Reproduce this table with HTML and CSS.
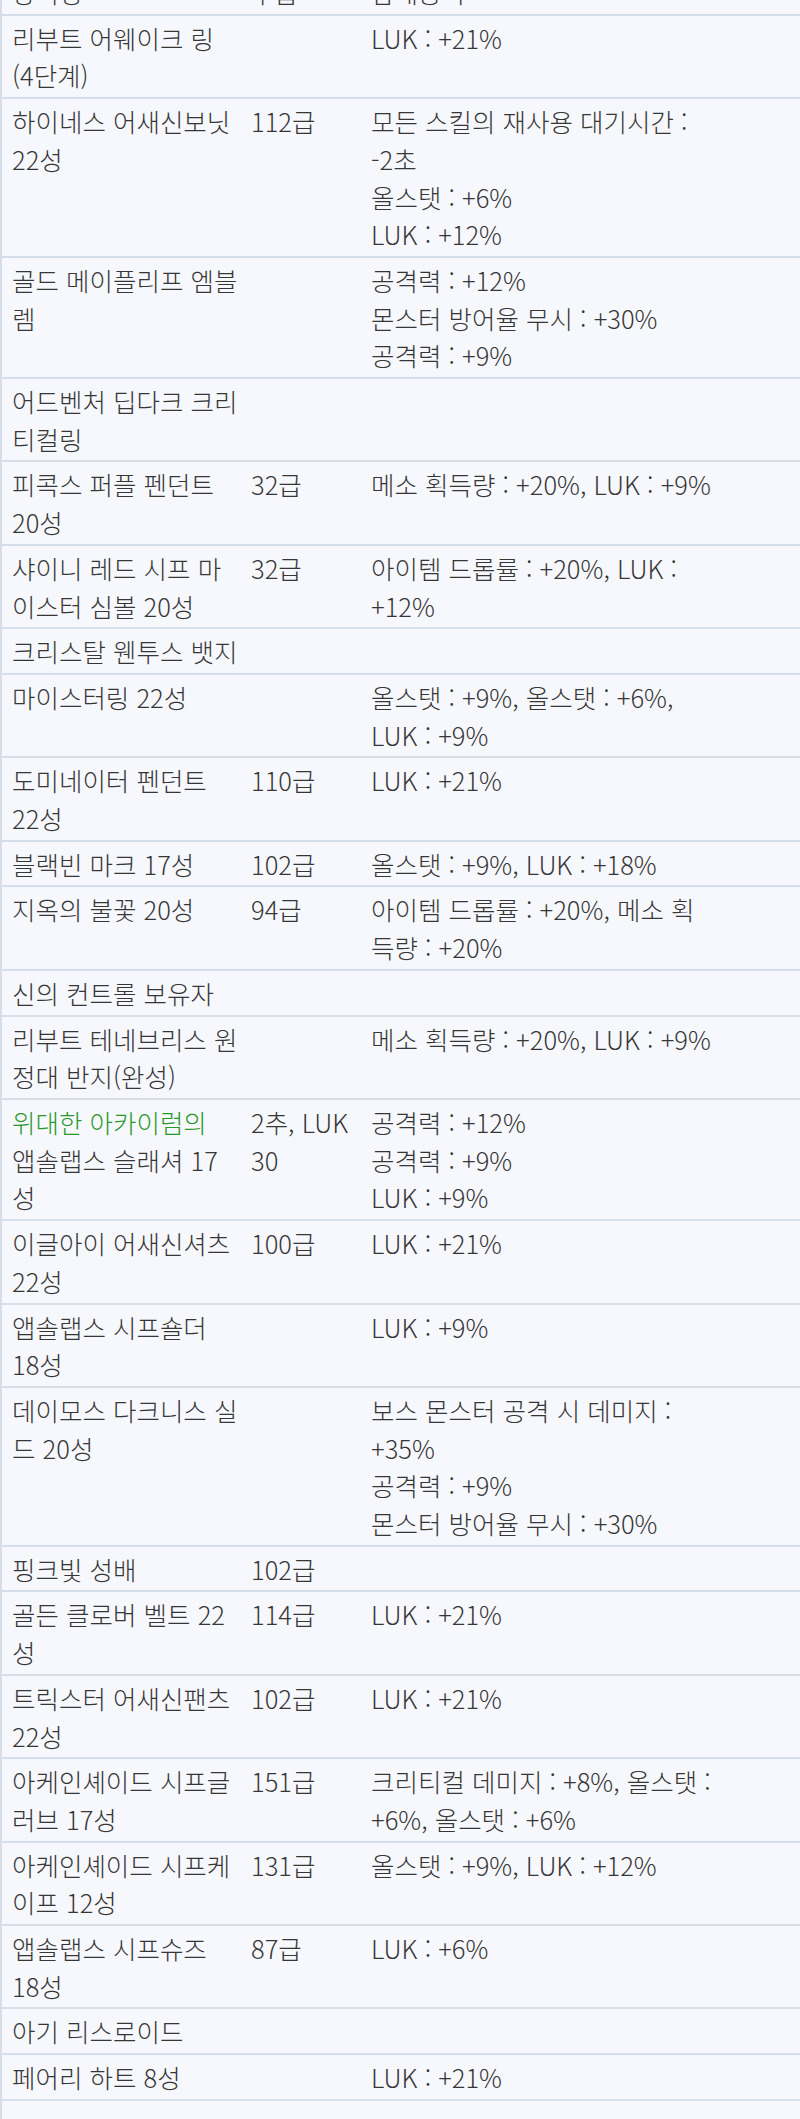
FILE: index.html
```html
<!DOCTYPE html>
<html lang="ko">
<head>
<meta charset="utf-8">
<title>장비 목록</title>
<link rel="stylesheet" href="styles.css">
</head>
<body>
<div class="viewport">
<table class="equip">
<colgroup><col class="c-name"><col class="c-opt"><col class="c-pot"></colgroup>
<tbody>
<tr class="head"><td>장비명</td><td>추옵</td><td>잠재능력</td></tr>
<tr><td>리부트 어웨이크 링<br>(4단계)</td><td></td><td>LUK : +21%</td></tr>
<tr><td>하이네스 어새신보닛<br>22성</td><td>112급</td><td>모든 스킬의 재사용 대기시간 :<br>-2초<br>올스탯 : +6%<br>LUK : +12%</td></tr>
<tr><td>골드 메이플리프 엠블<br>렘</td><td></td><td>공격력 : +12%<br>몬스터 방어율 무시 : +30%<br>공격력 : +9%</td></tr>
<tr><td>어드벤처 딥다크 크리<br>티컬링</td><td></td><td></td></tr>
<tr><td>피콕스 퍼플 펜던트<br>20성</td><td>32급</td><td>메소 획득량 : +20%, LUK : +9%</td></tr>
<tr><td>샤이니 레드 시프 마<br>이스터 심볼 20성</td><td>32급</td><td>아이템 드롭률 : +20%, LUK :<br>+12%</td></tr>
<tr><td>크리스탈 웬투스 뱃지</td><td></td><td></td></tr>
<tr><td>마이스터링 22성</td><td></td><td>올스탯 : +9%, 올스탯 : +6%,<br>LUK : +9%</td></tr>
<tr><td>도미네이터 펜던트<br>22성</td><td>110급</td><td>LUK : +21%</td></tr>
<tr><td>블랙빈 마크 17성</td><td>102급</td><td>올스탯 : +9%, LUK : +18%</td></tr>
<tr><td>지옥의 불꽃 20성</td><td>94급</td><td>아이템 드롭률 : +20%, 메소 획<br>득량 : +20%</td></tr>
<tr><td>신의 컨트롤 보유자</td><td></td><td></td></tr>
<tr><td>리부트 테네브리스 원<br>정대 반지(완성)</td><td></td><td>메소 획득량 : +20%, LUK : +9%</td></tr>
<tr><td><span class="green">위대한 아카이럼의</span><br>앱솔랩스 슬래셔 17<br>성</td><td>2추, LUK<br>30</td><td>공격력 : +12%<br>공격력 : +9%<br>LUK : +9%</td></tr>
<tr><td>이글아이 어새신셔츠<br>22성</td><td>100급</td><td>LUK : +21%</td></tr>
<tr><td>앱솔랩스 시프숄더<br>18성</td><td></td><td>LUK : +9%</td></tr>
<tr><td>데이모스 다크니스 실<br>드 20성</td><td></td><td>보스 몬스터 공격 시 데미지 :<br>+35%<br>공격력 : +9%<br>몬스터 방어율 무시 : +30%</td></tr>
<tr><td>핑크빛 성배</td><td>102급</td><td></td></tr>
<tr><td>골든 클로버 벨트 22<br>성</td><td>114급</td><td>LUK : +21%</td></tr>
<tr><td>트릭스터 어새신팬츠<br>22성</td><td>102급</td><td>LUK : +21%</td></tr>
<tr><td>아케인셰이드 시프글<br>러브 17성</td><td>151급</td><td>크리티컬 데미지 : +8%, 올스탯 :<br>+6%, 올스탯 : +6%</td></tr>
<tr><td>아케인셰이드 시프케<br>이프 12성</td><td>131급</td><td>올스탯 : +9%, LUK : +12%</td></tr>
<tr><td>앱솔랩스 시프슈즈<br>18성</td><td>87급</td><td>LUK : +6%</td></tr>
<tr><td>아기 리스로이드</td><td></td><td></td></tr>
<tr><td>페어리 하트 8성</td><td></td><td>LUK : +21%</td></tr>
<tr class="empty"><td></td><td></td><td></td></tr>
</tbody>
</table>
</div>
</body>
</html>
```
FILE: styles.css
```css
html, body {
  margin: 0;
  padding: 0;
  background: #e9edf5;
}
.viewport {
  width: 800px;
  height: 2119px;
  overflow: hidden;
  background: #f7f8fd;
}
.equip {
  width: 800px;
  margin-top: -32px;
  border-collapse: collapse;
  table-layout: fixed;
  font-family: "Noto Sans CJK KR", "Noto Sans", sans-serif;
  font-weight: 300;
  font-size: 25.5px;
  line-height: 37.7px;
  color: #363636;
  background: #f7f8fd;
  border-left: 2px solid #d7deeb;
  border-right: 2px solid #d7deeb;
}
.c-name { width: 240px; }
.c-opt { width: 120px; }
.c-pot { width: 440px; }
.equip td {
  padding: 3px 4px 3px 10px;
  vertical-align: top;
  white-space: nowrap;
  border-top: 2px solid #d7deeb;
  border-bottom: 2px solid #d7deeb;
}
.equip tr.empty td {
  height: 13px;
  line-height: 13px;
}
.green {
  color: #27992a;
}
```
